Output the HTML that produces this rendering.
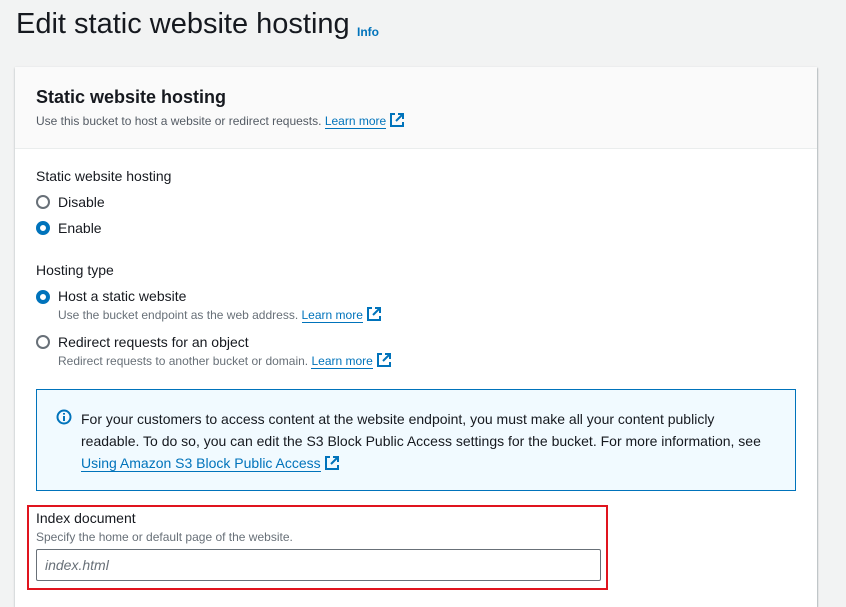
<!DOCTYPE html>
<html><head><style>
*{margin:0;padding:0;box-sizing:border-box}
body{width:846px;height:599px;overflow:hidden;background:#f2f3f3;font-family:"Liberation Sans",sans-serif;color:#16191f;position:relative}
.a{position:absolute;white-space:nowrap}
.t14{font-size:14px}
.s{font-size:12px;color:#687078}
a{color:#0073bb;text-decoration:none;border-bottom:1px solid #0073bb}
.ext{display:inline-block;vertical-align:-2px;margin-left:4px}
.radio{position:absolute;width:14px;height:14px;border-radius:50%;border:2px solid #687078;background:#fff}
.radio.on{border:4px solid #0073bb}
</style></head><body>
<div class="a" style="left:16px;top:8px;font-size:29px;">Edit static website hosting</div>
<div class="a" style="left:357px;top:25px;font-size:12px;font-weight:bold;color:#0073bb">Info</div>
<div class="a" style="left:15px;top:67px;width:802px;height:540px;background:#fff;box-shadow:0 1px 2px rgba(0,28,36,.3),1px 1px 1px rgba(0,28,36,.15)"></div>
<div class="a" style="left:15px;top:67px;width:802px;height:82px;background:#fafafa;border-bottom:1px solid #eaeded"></div>
<div class="a" style="left:36px;top:87px;font-size:18px;font-weight:bold">Static website hosting</div>
<div class="a s" style="left:36px;top:113px;color:#545b64">Use this bucket to host a website or redirect requests. <a>Learn more</a><svg class="ext" width="14" height="14" viewBox="0 0 14 14" fill="none" stroke="#0073bb" stroke-width="2"><path d="M5 1H1v12h12V9M8 1h5v5M13 1L6 8"/></svg></div>
<div class="a t14" style="left:36px;top:168px">Static website hosting</div>
<div class="radio" style="left:36px;top:195px"></div><div class="a t14" style="left:58px;top:194px">Disable</div>
<div class="radio on" style="left:36px;top:221px"></div><div class="a t14" style="left:58px;top:220px">Enable</div>
<div class="a t14" style="left:36px;top:262px">Hosting type</div>
<div class="radio on" style="left:36px;top:290px"></div><div class="a t14" style="left:58px;top:288px">Host a static website</div>
<div class="a s" style="left:58px;top:307px">Use the bucket endpoint as the web address. <a>Learn more</a><svg class="ext" width="14" height="14" viewBox="0 0 14 14" fill="none" stroke="#0073bb" stroke-width="2"><path d="M5 1H1v12h12V9M8 1h5v5M13 1L6 8"/></svg></div>
<div class="radio" style="left:36px;top:335px"></div><div class="a t14" style="left:58px;top:334px">Redirect requests for an object</div>
<div class="a s" style="left:58px;top:353px">Redirect requests to another bucket or domain. <a>Learn more</a><svg class="ext" width="14" height="14" viewBox="0 0 14 14" fill="none" stroke="#0073bb" stroke-width="2"><path d="M5 1H1v12h12V9M8 1h5v5M13 1L6 8"/></svg></div>
<div class="a" style="left:36px;top:389px;width:760px;height:102px;background:#f1faff;border:1px solid #0073bb"></div>
<svg class="a" style="left:56px;top:409px" width="16" height="16" viewBox="0 0 16 16"><circle cx="8" cy="8" r="6.5" fill="none" stroke="#0073bb" stroke-width="2"/><path d="M8 7v5M8 4v1.6" stroke="#0073bb" stroke-width="2"/></svg>
<div class="a t14" style="left:81px;top:408px;line-height:22px">For your customers to access content at the website endpoint, you must make all your content publicly<br>readable. To do so, you can edit the S3 Block Public Access settings for the bucket. For more information, see<br><a>Using Amazon S3 Block Public Access</a><svg class="ext" width="14" height="14" viewBox="0 0 14 14" fill="none" stroke="#0073bb" stroke-width="2"><path d="M5 1H1v12h12V9M8 1h5v5M13 1L6 8"/></svg></div>
<div class="a" style="left:27px;top:505px;width:581px;height:85px;border:2px solid #e0141e"></div>
<div class="a t14" style="left:36px;top:510px">Index document</div>
<div class="a s" style="left:36px;top:530px">Specify the home or default page of the website.</div>
<div class="a" style="left:36px;top:549px;width:565px;height:32px;border:1px solid #687078;border-radius:2px;background:#fff"></div>
<div class="a t14" style="left:45px;top:557px;font-style:italic;color:#687078">index.html</div>
</body></html>
